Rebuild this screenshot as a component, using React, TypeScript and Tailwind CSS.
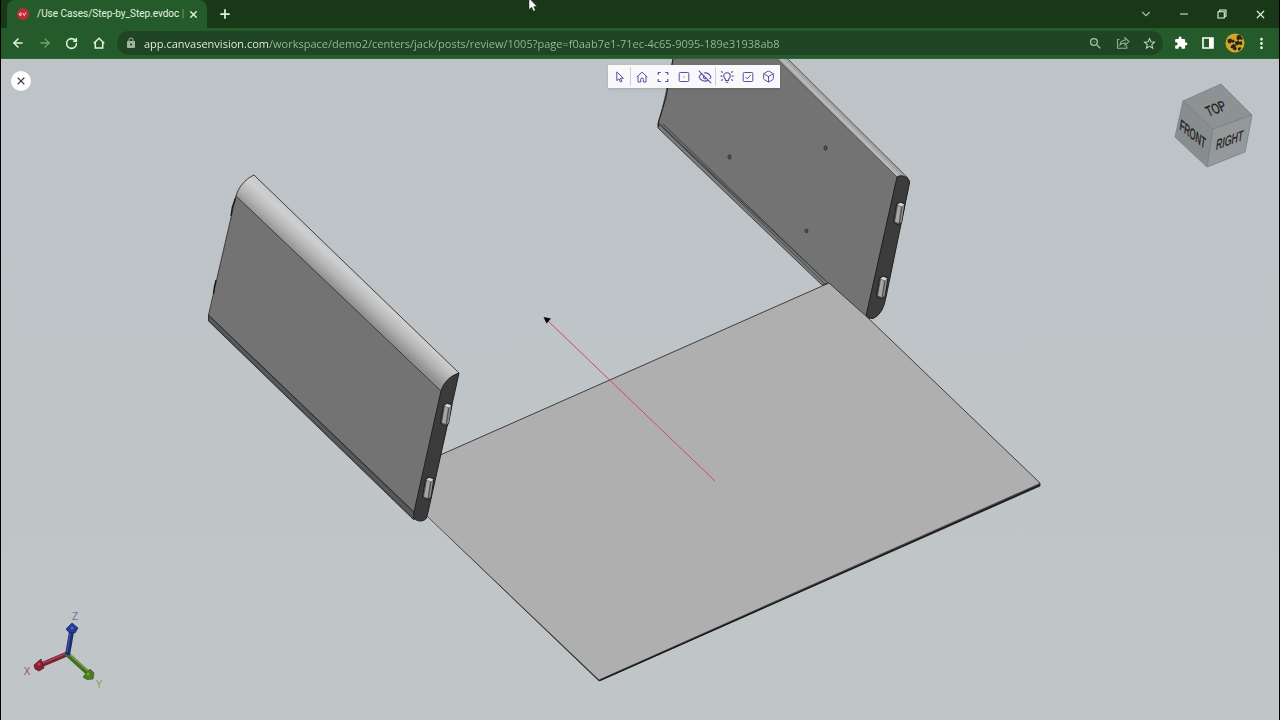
import type { ReactNode } from "react";
import { ArrowLeft, ArrowRight, Box, ChevronDown, EyeOff, Minus, Plus, RotateCw, X } from "lucide-react";
import { MdExtension, MdLock, MdMoreVert, MdOutlineZoomOut, MdStarBorder } from "react-icons/md";

type IconButtonProps = { label: string; className?: string; children: ReactNode };

function ChromeButton({ label, className = "w-[27px]", children }: IconButtonProps) {
  return (
    <button
      type="button"
      aria-label={label}
      className={`flex h-7 shrink-0 items-center justify-center ${className}`}
    >
      {children}
    </button>
  );
}

function TabStrip() {
  return (
    <div className="flex h-7 items-center bg-[#193818] text-[#e2f3e0]">
      <div className="ml-1.5 flex h-full w-[200px] items-center rounded-t-lg bg-[#255b2a] pl-2.5">
        <svg className="mr-2 size-3 shrink-0" viewBox="0 0 12 12" aria-hidden="true">
          <circle cx="6" cy="6" r="6" fill="#bd2b33" />
          <path
            d="M2.2 6.100h2.400c0-1.500-2.400-1.500-2.400.1 0 1.500 1.700 1.700 2.400.9M5.900 4.800 7.300 7.700 8.900 4.300"
            fill="none"
            stroke="#f5c9cb"
            strokeWidth="1"
          />
        </svg>
        <span className="flex-1 font-['Roboto','Open_Sans',sans-serif] text-[10px] leading-4 whitespace-nowrap">
          /Use Cases/Step-by_Step.evdoc <span className="text-[#7fa481]">|</span>
        </span>
        <button type="button" aria-label="Close tab" className="mr-1.5 flex size-4 items-center justify-center">
          <X size={11} strokeWidth={3} />
        </button>
      </div>
      <button type="button" aria-label="New tab" className="ml-2.5 flex size-4 items-center justify-center">
        <Plus size={14} strokeWidth={3} />
      </button>
      <div className="ml-auto flex">
        <ChromeButton label="Search tabs" className="w-[38px]">
          <ChevronDown size={14} strokeWidth={2} className="text-[#a3bda2]" />
        </ChromeButton>
        <ChromeButton label="Minimize" className="w-[38px]">
          <Minus size={12} strokeWidth={2} />
        </ChromeButton>
        <ChromeButton label="Restore" className="w-[38px]">
          <svg className="size-2.5" viewBox="0 0 10 10" fill="none" stroke="currentColor" strokeWidth="1.1">
            <path d="M1 2.700h6.300V9H1zM2.700 2.500V1H9v6.300H7.500" />
          </svg>
        </ChromeButton>
        <ChromeButton label="Close window" className="w-[38px]">
          <X size={13} strokeWidth={2.200} />
        </ChromeButton>
      </div>
    </div>
  );
}

function AddressRow() {
  return (
    <div className="flex h-[31px] items-center border-b border-[#2c6a33] bg-[#255b2a] pr-1 pl-[3px] text-[#e2f3e0]">
      <ChromeButton label="Back">
        <ArrowLeft size={14} strokeWidth={2.600} />
      </ChromeButton>
      <ChromeButton label="Forward">
        <ArrowRight size={14} strokeWidth={2.200} className="text-[#75a077]" />
      </ChromeButton>
      <ChromeButton label="Reload">
        <RotateCw size={13} strokeWidth={2.800} />
      </ChromeButton>
      <ChromeButton label="Home">
        <svg className="size-3" viewBox="0 0 12 12" fill="none" stroke="currentColor" strokeWidth="1.500">
          <path d="M.8 6.300 6 1.200l5.200 5.100M2.300 5.200V11h7.400V5.200" />
        </svg>
      </ChromeButton>
      <div className="mr-1 ml-[5px] flex h-6 min-w-0 flex-1 items-center rounded-full bg-[#204524] pl-2">
        <MdLock size={12} className="mr-[7px] shrink-0 text-[#9db59d]" />
        <input
          type="text"
          aria-label="Address and search bar"
          readOnly
          value="app.canvasenvision.com/workspace/demo2/centers/jack/posts/review/1005?page=f0aab7e1-71ec-4c65-9095-189e31938ab8"
          className="min-w-0 flex-1 bg-linear-to-r from-[#eef8ed] from-[125px] to-[#9fb89f] to-[125px] bg-clip-text pt-px text-[11px] leading-5 text-transparent outline-none"
        />
        <ChromeButton label="Zoom">
          <MdOutlineZoomOut size={15} className="text-[#a9c4a9]" />
        </ChromeButton>
        <ChromeButton label="Share">
          <svg className="size-3.5 text-[#94b195]" viewBox="0 0 14 14" fill="none" stroke="currentColor" strokeWidth="1.100">
            <path d="M3.500 3.500H1.500v8.800h9.300V9.500" />
            <path d="M4 9c.3-3.300 2-4.700 5-4.800V1.900l3.900 3.700L9 9.200V7C6.800 7 5.300 7.500 4 9z" />
          </svg>
        </ChromeButton>
        <ChromeButton label="Bookmark this page">
          <MdStarBorder size={15} className="text-[#c5dac5]" />
        </ChromeButton>
      </div>
      <ChromeButton label="Extensions">
        <MdExtension size={14} className="text-white" />
      </ChromeButton>
      <ChromeButton label="Side panel">
        <svg className="size-3" viewBox="0 0 12 12" aria-hidden="true">
          <path d="M1 1h10v10H1z" fill="none" stroke="#fff" strokeWidth="1.600" />
          <path d="M7 1h4v10H7z" fill="#fff" />
        </svg>
      </ChromeButton>
      <ChromeButton label="Profile">
        <svg className="size-5" viewBox="0 0 20 20" aria-hidden="true">
          <circle cx="10" cy="10" r="9.500" fill="#d3a52c" />
          <path
            d="M12 2.500 15 2l3 4-2 1-1-1-1.500 1.500L11.500 6zM2.500 6.500 6 5.500l1 1.500 1.500-.5 1.500 2-2 1.500-1.500-1-1 1.500-2.500-.5zM10 9l3-1.500 1.500 1.500 2-1 1 3.500-2.500.5-1-1-1.500 1.500-2-.5zM6.500 12l2.500-1 2 1.500-.5 1.500 1.500 1-1.500 2.500-2.500-1-.5-1.500-2 0zM13 15l2-1 1.500 1-2 2.500-1.500 0z"
            fill="#26260f"
          />
        </svg>
      </ChromeButton>
      <ChromeButton label="Menu">
        <MdMoreVert size={17} />
      </ChromeButton>
    </div>
  );
}

const toolGroups: { label: string; icon: ReactNode }[][] = [
  [
    {
      label: "Select",
      icon: (
        <svg className="size-3" viewBox="0 0 12 12" fill="none" stroke="currentColor" strokeWidth="1">
          <path d="M2.800.9v8.800l2.200-1.900 1.400 3.300 1.500-.7-1.400-3.100h2.900z" strokeLinejoin="round" />
        </svg>
      ),
    },
  ],
  [
    {
      label: "Home view",
      icon: (
        <svg className="size-3" viewBox="0 0 12 12" fill="none" stroke="currentColor" strokeWidth="1">
          <path d="M.7 6 6 1.200 11.300 6M2 5v6h2.700V8.300a1.300 1.300 0 0 1 2.600 0V11H10V5" />
        </svg>
      ),
    },
    {
      label: "Full screen",
      icon: (
        <svg className="size-3" viewBox="0 0 12 12" fill="none" stroke="currentColor" strokeWidth="1.100">
          <path d="M1.200 4V1.500h2.600M8.200 1.500h2.600V4M10.800 8v2.500H8.200M3.800 10.500H1.200V8" />
        </svg>
      ),
    },
    {
      label: "Fit",
      icon: (
        <svg className="size-3" viewBox="0 0 12 12" fill="none" stroke="currentColor" strokeWidth="1">
          <rect x="1.200" y="1.500" width="9.600" height="9" rx="1" />
          <path d="m5.500 6.500 1-1" />
        </svg>
      ),
    },
    { label: "Hide", icon: <EyeOff size={14} strokeWidth={1.800} /> },
  ],
  [
    {
      label: "Highlight",
      icon: (
        <svg className="size-3.5" viewBox="0 0 14 14" fill="none" stroke="currentColor" strokeWidth="1.100">
          <path d="M5.500 9.300C4.300 8.300 3.800 7.300 3.800 6a3.200 3.200 0 0 1 6.400 0c0 1.300-.5 2.300-1.700 3.300v1.200h-3zM5.700 12.300h2.600M.5 6.100h1.900M11.600 6.100h1.900M1 1.500l1.900 1M13 1.500l-1.900 1M1 10.500l1.900-1M13 10.500l-1.900-1" />
        </svg>
      ),
    },
    {
      label: "Checks",
      icon: (
        <svg className="size-3" viewBox="0 0 12 12" fill="none" stroke="currentColor" strokeWidth="1">
          <rect x="1.200" y="1.500" width="9.600" height="9" rx="1" />
          <path d="m3.500 6 1.800 1.800L8.700 4" />
        </svg>
      ),
    },
    { label: "Model", icon: <Box size={13} strokeWidth={1.800} /> },
  ],
];

function ViewerToolbar() {
  return (
    <div
      role="toolbar"
      aria-label="Viewer tools"
      className="absolute top-1.5 left-1/2 -ml-8 flex h-[23px] divide-x divide-[#cfcfdf] bg-[#f9f9fc] px-px text-[#554fa0] shadow-sm"
    >
      {toolGroups.map((group) => (
        <div key={group[0].label} className="my-0.5 flex">
          {group.map((tool) => (
            <button
              key={tool.label}
              type="button"
              aria-label={tool.label}
              className="flex w-[21px] items-center justify-center"
            >
              {tool.icon}
            </button>
          ))}
        </div>
      ))}
    </div>
  );
}

/** A small dowel protruding from a panel's end face. */
function Dowel({ x, y }: { x: number; y: number }) {
  return (
    <g transform={`translate(${x} ${y})`} strokeLinejoin="round">
      <path d="M.5 20 3.500 2 7 0l5 2-3.500 19-3.500 2z" fill="#5c5c5c" stroke="#1c1c1c" strokeWidth=".9" />
      <path d="M1.500 20 4.500 3l4 1.500L6 21.500z" fill="#a6a6a6" stroke="#333" strokeWidth=".6" />
      <path d="M9.500 4 7 21l1.500-.8L11 3.500z" fill="#8a8a8a" />
      <path d="m4.500 3 2.500-2.200L11.300 2.500 9 4.500z" fill="#d6d6d6" />
    </g>
  );
}

function ModelScene() {
  return (
    <svg className="block w-full" viewBox="1 59 1278 661" role="img" aria-label="Exploded assembly model">
      <defs>
        <linearGradient id="sky" x1="0" y1="0" x2="0" y2="1">
          <stop offset="0" stopColor="#bec3c7" />
          <stop offset="1" stopColor="#c0c5c8" />
        </linearGradient>
        <linearGradient id="roll" gradientUnits="userSpaceOnUse" x1="339" y1="293" x2="360" y2="270">
          <stop offset="0" stopColor="#909090" />
          <stop offset=".35" stopColor="#b5b5b5" />
          <stop offset=".7" stopColor="#d0cfcf" />
          <stop offset="1" stopColor="#c4c6c8" />
        </linearGradient>
        <linearGradient id="farRoll" gradientUnits="userSpaceOnUse" x1="836" y1="118" x2="844" y2="110">
          <stop offset="0" stopColor="#858585" />
          <stop offset=".25" stopColor="#bcbcbc" />
          <stop offset=".7" stopColor="#999" />
          <stop offset="1" stopColor="#626262" />
        </linearGradient>
      </defs>
      <rect x="1" y="59" width="1278" height="661" fill="url(#sky)" />

      <g strokeLinejoin="round">
        <path d="M673 59 658 127 824 286 870 318 909 181 786 59z" fill="#666" />
        <path d="M658 123v5L822 285l6-2z" fill="#777b7d" stroke="#333" strokeWidth=".9" />
        <path d="M673 59 659 122 829 284 867 316 897 177 777 59z" fill="#737373" />
        <path d="M777 59 897 177 904 175.500 908 178 788 59z" fill="url(#farRoll)" />
        <path d="M777 59 897 177M788 59 908 178" fill="none" stroke="#4d4d4d" strokeWidth=".8" />
        <path d="m660 125 166 160M663 124l166 160" fill="none" stroke="#3c3c3c" strokeWidth=".9" />
        <path d="m673 59-3.500 18L666 97l-7.500 25v5" fill="none" stroke="#222" strokeWidth="1.200" />
        <path
          d="M897 177c3-2.500 13-1 12.500 6L886 297c-2 10-5 18-13 21.500-4 0-6-.8-7-2.500z"
          fill="#3c3c3c"
          stroke="#202020"
          strokeWidth="1"
        />
        <Dowel x={893} y={202} />
        <Dowel x={876} y={276} />
        <g fill="#5a5a5a" stroke="#222" strokeWidth=".8">
          <ellipse cx="729.500" cy="157" rx="1.500" ry="2.200" />
          <ellipse cx="825.500" cy="148" rx="1.500" ry="2.200" />
          <ellipse cx="806.500" cy="231" rx="1.400" ry="1.700" />
        </g>
      </g>

      <g strokeLinejoin="round">
        <path d="M426 515 599 681l441-195v-3z" fill="#474747" stroke="#1d1d1d" strokeWidth=".8" />
        <path d="m829 283 38 34 173 166-441 196.500L424 513l14-57z" fill="#afafaf" />
        <path d="m438 456 391-173 38 34 173 166" fill="none" stroke="#303030" strokeWidth=".9" />
        <path d="m600 680.500 440-195.500" fill="none" stroke="#161616" strokeWidth="1.100" />
      </g>

      <g strokeLinejoin="round">
        <path d="M254 175 459 373 441 391 236 196c2-8 9-17 18-21z" fill="url(#roll)" />
        <path d="M236 196 441 391 414 513 208.500 316z" fill="#737373" />
        <path d="M208.500 315 414 512v8L208.500 321z" fill="#4f5152" stroke="#222" strokeWidth=".9" />
        <path d="m209 318 205 198" fill="none" stroke="#6c6c6c" strokeWidth=".8" />
        <path
          d="M459 373 254 175c-9 4-16 13-18 21L441 391M236 196l-27.500 119v6"
          fill="none"
          stroke="#303030"
          strokeWidth=".9"
        />
        <path d="M235.500 198q-4 9-4.500 18M216 280q-2 7-2.500 14" fill="none" stroke="#151515" strokeWidth="1.300" />
        <path
          d="M459 373c-9 3-15 9-18 18l-27 121v6c3 4 10 4 12.500 0l2-8z"
          fill="#3b3b3b"
          stroke="#202020"
          strokeWidth="1"
        />
        <Dowel x={440} y={403} />
        <Dowel x={422} y={477} />
      </g>

      <path d="M547 320 715 481" fill="none" stroke="#d9456a" strokeWidth="1" />
      <path d="m543.500 317 7.500 1.500-4.500 5z" fill="#080808" />

      <g strokeLinejoin="round" stroke="#6b8799" strokeWidth=".9">
        <path d="m1221 84 31 31-39 14-30-28z" fill="#8f9293" />
        <path d="m1183 101 30 28-6 38-32-30z" fill="#8a8d8e" />
        <path d="m1252 115-7 37-38 15 6-38z" fill="#969999" />
      </g>
      <g className="font-['Liberation_Sans',sans-serif]" fill="#1b1b1b" stroke="#1b1b1b" strokeWidth=".3" fontSize="12" textAnchor="middle">
        <text transform="matrix(.75 -.3 .55 1.100 1218 113)">TOP</text>
        <text transform="matrix(.62 .48 -.17 1.200 1192 139)">FRONT</text>
        <text transform="matrix(.73 -.27 -.16 1.200 1229 145)">RIGHT</text>
      </g>

      <g strokeLinecap="butt" fill="none">
        <path d="M67 654 41 665" stroke="#792331" strokeWidth="5" />
        <path d="M67 653 41 664" stroke="#a34452" strokeWidth="1.500" />
        <path d="m66 653 22 20" stroke="#456d22" strokeWidth="5" />
        <path d="m67 652 22 20" stroke="#74a047" strokeWidth="1.500" />
        <path d="m67.500 655 4-23" stroke="#1e2d70" strokeWidth="5" />
        <path d="m67 652 3.500-20" stroke="#4456a0" strokeWidth="1.300" />
      </g>
      <path d="m34 665 7-6 3 9-5 3-4-2z" fill="#8a2030" stroke="#551820" strokeWidth=".7" />
      <path d="m83 677 7-8 4 4-1 6-6 .5z" fill="#4d7d22" stroke="#365b16" strokeWidth=".7" />
      <path d="m66 629 6-6 6 5-3 5-6-.5z" fill="#23399c" stroke="#172461" strokeWidth=".7" />
      <circle cx="39" cy="664" r="1.500" fill="#b94353" />
      <circle cx="88" cy="674" r="1.500" fill="#74a53f" />
      <circle cx="72" cy="628" r="1.500" fill="#5369cc" />
      <g className="font-['Liberation_Sans',sans-serif]" fontSize="10" textAnchor="middle">
        <text x="27" y="675" fill="#a34b5a">
          X
        </text>
        <text x="75" y="620" fill="#5f789c">
          Z
        </text>
        <text x="99" y="688" fill="#81a46a">
          Y
        </text>
      </g>
    </svg>
  );
}

export default function App() {
  return (
    <div className="relative min-h-screen border-r border-l border-black bg-[#c0c5c8] font-['Open_Sans','Noto_Sans',sans-serif]">
      <header>
        <TabStrip />
        <AddressRow />
      </header>
      <main className="relative">
        <ModelScene />
        <button
          type="button"
          aria-label="Close viewer"
          className="absolute top-3 left-2.5 flex size-5 items-center justify-center rounded-full bg-white text-[#3c4246]"
        >
          <X size={12} strokeWidth={2.200} />
        </button>
        <ViewerToolbar />
      </main>
      <svg className="pointer-events-none absolute -top-0.5 left-[527px] h-3.5 w-2.5" viewBox="0 0 10 14" aria-hidden="true">
        <path d="M1 0v11.500l2.700-2.300 1.800 4 1.900-.9-1.700-3.700H9z" fill="#fff" stroke="#222" strokeWidth=".5" />
      </svg>
    </div>
  );
}
